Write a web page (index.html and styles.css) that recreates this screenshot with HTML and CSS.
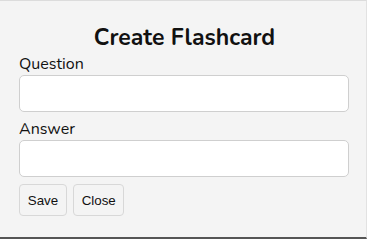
FILE: index.html
```html
<!DOCTYPE html>
<html>
<head>
<meta charset="utf-8">
<link rel="stylesheet" href="styles.css">
</head>
<body>
<div class="modal">
  <h2 class="title">Create Flashcard</h2>
  <label class="label" for="q">Question</label>
  <input class="field" id="q" type="text">
  <label class="label" for="a">Answer</label>
  <input class="field" id="a" type="text">
  <div class="actions">
    <button class="btn">Save</button>
    <button class="btn">Close</button>
  </div>
</div>
</body>
</html>
```

FILE: styles.css
```css
html, body {
  margin: 0;
  padding: 0;
  background: #ffffff;
}
.modal {
  box-sizing: border-box;
  width: 367px;
  height: 239px;
  background: #f4f4f4;
  border-top: 1px solid #dcdcdc;
  border-right: 1px solid #e2e2e2;
  border-bottom: 2px solid #555;
  padding: 21px 17px 0 19px;
  font-family: "Nunito", "Lato", "Noto Sans", sans-serif;
  color: #111;
}
.title {
  margin: 0;
  text-align: center;
  font-size: 23px;
  font-weight: 700;
  line-height: 32px;
  padding-left: 1px;
}
.label {
  display: block;
  font-size: 16px;
  line-height: 21px;
}
.field {
  display: block;
  box-sizing: border-box;
  width: 100%;
  height: 37px;
  margin: 0 0 7px 0;
  border: 1px solid #cfcfcf;
  border-radius: 5px;
  background: #fff;
}
.actions {
  display: flex;
  gap: 6px;
  margin-top: 3px;
}
.btn {
  font-family: "Liberation Sans", Arial, sans-serif;
  font-size: 13.33px;
  padding: 0 7.75px;
  height: 32px;
  border: 1px solid #d8d8d8;
  border-radius: 4px;
  background: #f4f4f4;
  color: #111;
}
```
